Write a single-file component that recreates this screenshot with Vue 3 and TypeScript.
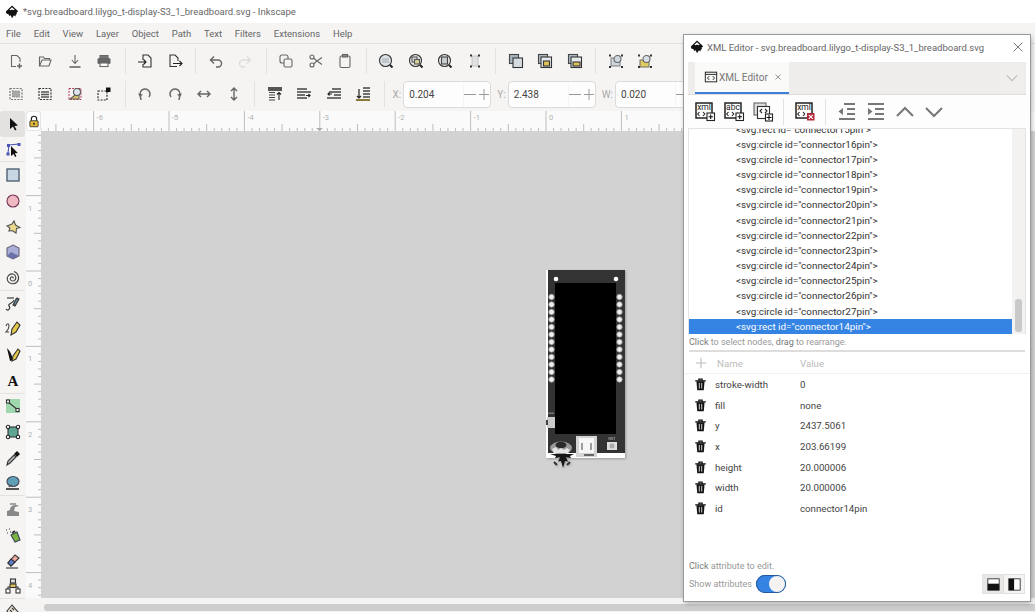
<script setup lang="ts">
const menus = ['File', 'Edit', 'View', 'Layer', 'Object', 'Path', 'Text', 'Filters', 'Extensions', 'Help']

const I: Record<string, string> = {
  logo: '<path d="M8 0.5 15 7l-2 2 .8 1.200-1.300.6-.7 2.200-1.500-1.300L8 15l-1.400-3.300-1.600 1-1-2-2.500-1L1 7.500z" fill="#111" stroke="none"/><path d="M8 2.500 5 5.500l1.600.4L8 5l1.400 1 1.700-.6z" fill="#fff" stroke="none"/>',
  new: '<path d="M8 13.500H3.500V2.500h5.500l3 3v3.500"/><path d="M11.500 10.500v5M9 13h5" stroke-width="1.500"/>',
  open: '<path d="M2.500 13V4h4l1 1.500h5V7"/><path d="M2.500 13h9.500l2-6H5z"/>',
  save: '<path d="M8 2v8M4.800 7 8 10.500 11.200 7" /><path d="M2.500 14h11" stroke-width="1.600"/>',
  print: '<path d="M4 5V2.500h8V5" fill="#777"/><rect x="1.500" y="5" width="13" height="6" rx="1.500" fill="#666" stroke="none"/><rect x="4" y="10" width="8" height="3.500" fill="#fff"/>',
  imp: '<path d="M6 7V2h5l3 3v9H6v-3" stroke="#333"/><path d="M1 9h8M6.500 6.500 9 9l-2.500 2.500" stroke="#222"/>',
  exp: '<path d="M10 13.500H3V2h5l3 3v3" stroke="#333"/><path d="M6 10.500h9M12.500 8l2.500 2.500L12.500 13" stroke="#222"/>',
  undo: '<path d="M3 7h7a3.500 3.500 0 0 1 0 7H8M6 3.500 2.500 7 6 10.500" stroke-width="1.400"/>',
  redo: '<path d="M13 7H6a3.500 3.500 0 0 0 0 7h2M10 3.500 13.500 7 10 10.500" stroke="#ddd" stroke-width="1.400"/>',
  copy: '<rect x="2" y="2" width="8" height="8" rx="2"/><rect x="6" y="6" width="8" height="8" rx="1.500" fill="#f5f4f3"/>',
  cut: '<circle cx="4" cy="4" r="2"/><circle cx="4" cy="12" r="2"/><path d="M5.500 5 9 8l-3.500 3M9 8l5-3.500M9 8l5 3.500"/>',
  paste: '<rect x="3" y="3" width="10" height="11.500" rx="1.500"/><rect x="5.500" y="1.500" width="5" height="2.500" fill="#888"/>',
  z1: '<circle cx="7.500" cy="7.500" r="6" fill="#dfe3e6" stroke="#333"/><rect x="4" y="5" width="7" height="5" fill="#bfc7cc" stroke="none"/><path d="m12 12 2.500 2.500" stroke="#222" stroke-width="2"/>',
  z2: '<circle cx="7.500" cy="7.500" r="6" fill="#e6e6e6" stroke="#333"/><rect x="4" y="4" width="5" height="5" fill="#ddd" stroke="#555"/><rect x="6.500" y="6.500" width="5" height="4.500" fill="#d8cf9c" stroke="#555"/><path d="m12 12 2.500 2.500" stroke="#222" stroke-width="2"/>',
  z3: '<circle cx="7.500" cy="7.500" r="6" fill="#e6e6e6" stroke="#333"/><rect x="4.500" y="4" width="6" height="7" fill="#c8cdd0" stroke="#444"/><path d="m12 12 2.500 2.500" stroke="#222" stroke-width="2"/>',
  z4: '<rect x="5" y="3" width="6" height="10" fill="#e2e2e2" stroke="#bbb" stroke-width=".8"/><path d="M3 1.500h2v2H3zM11 1.500h2v2h-2zM3 12.500h2v2H3zM11 12.500h2v2h-2z" fill="#333" stroke="none"/>',
  o1: '<rect x="1.500" y="1.500" width="9" height="9" fill="#a6b4bf" stroke="#444"/><rect x="5" y="5" width="9.500" height="9.500" fill="#d5dde3" stroke="#333"/>',
  o2: '<rect x="1.500" y="1.500" width="9" height="9" fill="#b0bcc6" stroke="#444"/><rect x="4" y="4" width="10.500" height="10.500" fill="#e7eaec" stroke="#333"/><rect x="6.500" y="8" width="6" height="5" fill="#e0c35a" stroke="#333"/>',
  o3: '<rect x="1.500" y="1.500" width="9" height="9" fill="#b0bcc6" stroke="#444"/><rect x="4" y="4" width="10.500" height="10.500" fill="#e7eaec" stroke="#333"/><rect x="6" y="9" width="7" height="4" fill="#e0c35a" stroke="#333"/>',
  g1: '<rect x="3" y="5" width="9" height="8" fill="#cdd6dc" stroke="#888"/><circle cx="9.500" cy="6" r="3.500" fill="#cdd8e0" stroke="#666"/><path d="M1 1.500h2v2H1zM13 1.500h2v2h-2zM1 13h2v2H1zM13 13h2v2h-2z" fill="#333" stroke="none"/>',
  g2: '<rect x="3" y="7" width="9" height="7" fill="#e3ca63" stroke="#776"/><circle cx="9.500" cy="6" r="3.500" fill="#d8dfe5" stroke="#666"/><path d="M1 1.500h2v2H1zM13 1.500h2v2h-2zM1 13h2v2H1zM13 13h2v2h-2z" fill="#333" stroke="none"/>',
  s1: '<rect x="2" y="2.500" width="12" height="11" stroke="#777" stroke-dasharray="2 1.200" stroke-width="1.200"/><rect x="4.500" y="5" width="7" height="6" fill="#aaa" stroke="#888" stroke-dasharray="1.500 1"/>',
  s2: '<rect x="2" y="2.500" width="12" height="11" stroke="#333" stroke-dasharray="2 1.200" stroke-width="1.200"/><path d="M4 6h8M4 8.500h8M4 11h8" stroke="#555" stroke-width="1.300"/>',
  s3: '<rect x="2" y="2.500" width="12" height="11" stroke="#b35" stroke-dasharray="2 1.200" stroke-width="1"/><path d="M3 13 12 6v7z" fill="#d4c070" stroke="#665"/><circle cx="10" cy="6" r="3.500" fill="#dce6ee" stroke="#555"/>',
  s4: '<rect x="2" y="5" width="9" height="9" stroke="#333" stroke-dasharray="2 1.200" stroke-width="1.200"/><rect x="10" y="1.500" width="4.500" height="4.500" fill="#111" stroke="none"/>',
  r1: '<path d="M4 14 3 8a5 5 0 1 1 9 3" stroke-width="1.500"/><path d="M1 7.500 3 11l3-2.500z" fill="#666" stroke="none"/>',
  r2: '<path d="M12 14 13 8a5 5 0 1 0-9 3" stroke-width="1.500"/><path d="M15 7.500 13 11l-3-2.500z" fill="#666" stroke="none"/>',
  fh: '<path d="M2 8h12M5 5 2 8l3 3M11 5l3 3-3 3" stroke-width="1.400"/>',
  fv: '<path d="M8 2v12M5 5l3-3 3 3M5 11l3 3 3-3" stroke-width="1.400"/>',
  a1: '<path d="M1 2h14M1 4h14" stroke="#222" stroke-width="1.300"/><path d="M2 6.500h6M2 9h6M2 11.500h6M2 14h6" stroke="#444"/><path d="M12 14V6.500M10 8.500l2-2 2 2" stroke="#222"/>',
  a2: '<path d="M1 3h10M1 6h14M1 9h8M1 12h10" stroke="#444" stroke-width="1.300"/><path d="M10 9.500h4M12.500 8l1.500 1.500-1.500 1.500" stroke="#222"/>',
  a3: '<path d="M6 3h9M3 6h12M8 9h7M1 12h14" stroke="#444" stroke-width="1.300"/><path d="M6 8H2M3.500 6.500 2 8l1.500 1.500" stroke="#222"/>',
  a4: '<path d="M8 2h7M8 5h7M8 8h7M8 11h7" stroke="#444" stroke-width="1.300"/><path d="M1 14h14" stroke="#8a7a3a" stroke-width="2"/><path d="M4 3v9M2 10l2 2 2-2" stroke="#222" stroke-width="1.200"/>',
  sel: '<path d="M5 2v11l3-2.500 2 4 1.500-.8-2-3.700 3.500-.5z" fill="#111" stroke="none"/>',
  node: '<path d="M3 11 4 3l10-1" stroke="#4a55b5"/><path d="M6 4v10l2.500-2 1.600 3 1.300-.7-1.600-3 3-.4z" fill="#111" stroke="none"/><rect x="2" y="2" width="3" height="3" fill="#4a55b5" stroke="none"/><rect x="1.500" y="10.500" width="3" height="3" fill="#4a55b5" stroke="none"/><rect x="12.500" y="1" width="3" height="3" fill="#4a55b5" stroke="none"/>',
  rect: '<rect x="2" y="2" width="12" height="12" fill="#c9d6e3" stroke="#45586b" stroke-width="1.300"/>',
  ell: '<circle cx="8" cy="8" r="6" fill="#efb9c2" stroke="#735" stroke-width="1.100"/>',
  star: '<path d="M2 7 7 5l2-3 1.500 4 4.500 2.500-3.500 1L11 14l-4-2.500-3 .5.800-3z" fill="#e9d98c" stroke="#555"/>',
  cube: '<path d="M8 1 14 4v8l-6 3-6-3V4z" fill="#a9aed6" stroke="#667"/><path d="M6 8l8 4-6 3-6-3z" fill="#6a71a8" stroke="none"/>',
  spiral: '<path d="M8 8.500c1-1.500-1.500-2.500-2.500-.8-1 2 1.300 4 3.500 3 3-1.500 2-6-.8-6.700-4-1-7 3-5.700 6.500 1.500 3.500 6.500 4.500 9.500 1.500 3-3.200 1.500-9-3-10.500" stroke="#444" stroke-width="1.100"/>',
  pencil: '<path d="M1 13c2 3 5-1 3-3S9 7 9 4M12 2 8 9l2 1 4-7z" stroke="#333"/><path d="M2 2h7" stroke="#333"/><path d="M11 3 8.500 8.500l1.500.7 3.200-5z" fill="#5f9bb0" stroke="#444"/>',
  pen: '<path d="M1 5c1-3 3-3 3 0s-3 6-3 6h3" stroke="#444"/><path d="M12 1 7 8l-1 6 5-3 4-7z" fill="#e3c84a" stroke="#333"/>',
  cal: '<path d="M2 1c1 5 2 8 3 13l3-1c-1-4-2-8-6-12z" fill="#111" stroke="none"/><path d="M13 2 8 9l-1 5 4-2 4-8z" fill="#e3c84a" stroke="#333"/>',
  text: '<text x="8" y="13" text-anchor="middle" font-family="Liberation Serif,serif" font-weight="700" font-size="15" fill="#111" stroke="none">A</text>',
  grad: '<rect x="1" y="1" width="14" height="14" fill="#9fd8ae" stroke="none"/><path d="M3 4 13 12" stroke="#333"/><rect x="1.500" y="2" width="3" height="3" fill="#fff" stroke="#333"/><rect x="11" y="10.500" width="3" height="3" fill="#fff" stroke="#333"/>',
  mesh: '<rect x="3" y="3" width="10" height="10" fill="#5ea593" stroke="#333"/><circle cx="3" cy="3" r="1.700" fill="#fff" stroke="#222"/><circle cx="13" cy="3" r="1.700" fill="#fff" stroke="#222"/><circle cx="3" cy="13" r="1.700" fill="#fff" stroke="#222"/><circle cx="13" cy="13" r="1.700" fill="#fff" stroke="#222"/>',
  drop: '<path d="M2 15l1-4 6-6 2 2-6 6z" fill="#bbb" stroke="#333"/><path d="M9 4l3-3 3 3-3 3z" fill="#111" stroke="none"/>',
  bucket: '<ellipse cx="8" cy="6.500" rx="6" ry="5" fill="#5e9fb5" stroke="#445"/><path d="M1 14h13" stroke="#555" stroke-width="2"/><path d="M4 12c1-2 2-2 3-1" stroke="#555" stroke-width="1.500"/>',
  tweak: '<path d="M2 15V10l3-1c0-4 3-5 7-5l2 1-4 1-1 4 5 1v4z" fill="#888" stroke="none"/><path d="M5 3h6" stroke="#888" stroke-width="1.500"/>',
  spray: '<path d="M6 8l6-3 3 8-5 2z" fill="#7cb342" stroke="#345"/><path d="M1 3h1M4 2h1M2 6h1M5 5h1" stroke="#333"/><path d="M7 6l3-2" stroke="#333" stroke-width="2"/>',
  eraser: '<path d="M6 13 3 10l7-8 4 3z" fill="#f0a9a0" stroke="#333"/><path d="M6 13 3 10l3-4 4 3z" fill="#5c7fd0" stroke="#333"/><path d="M1 15h12" stroke="#333"/>',
  conn: '<rect x="5.500" y="1" width="5" height="4" fill="#ddd" stroke="#333"/><rect x="1" y="11" width="4" height="4" fill="#fff" stroke="#333"/><rect x="11" y="11" width="4" height="4" fill="#fff" stroke="#333"/><rect x="5" y="6" width="6" height="3.500" fill="#e0c35a" stroke="#333"/><path d="M3 11V9h2M13 11V9h-2" stroke="#333"/>',
  meas: '<path d="M2 7 7 1l6 7-6 7z" fill="#eee5d8" stroke="#333"/><path d="M5 6l2 2M7 4l2 2" stroke="#333"/>',
  xmlTab: '<rect x="1.500" y="2.500" width="13" height="11" stroke="#222" stroke-width="1.100"/><path d="M1.500 5h13" stroke="#222"/><path d="M6 7 4 9.200 6 11.400M10 7l2 2.200-2 2.200" stroke="#222"/>',
  close: '<path d="m3 3 10 10M13 3 3 13" stroke="#777" stroke-width="1.100"/>',
  chev: '<path d="m2 5 6 6 6-6" stroke="#bbb" stroke-width="1.300"/>',
  xmlN: '<rect x="1" y="1" width="16" height="15" fill="#fff" stroke="#222" stroke-width="1.500"/><text x="9" y="8" text-anchor="middle" font-size="8.500" font-family="Roboto,sans-serif" fill="#222" stroke="none">xml</text><path d="M4.500 10 2.700 12 4.500 14M8 10l1.800 2L8 14" stroke="#222"/><rect x="12" y="11" width="7.500" height="7.500" fill="#fff" stroke="#222"/><path d="M15.700 12.500v4.500M13.500 14.700h4.500" stroke="#111"/>',
  abcN: '<rect x="1" y="1" width="16" height="15" fill="#fff" stroke="#222" stroke-width="1.500"/><text x="9" y="8" text-anchor="middle" font-size="8.500" font-family="Roboto,sans-serif" fill="#222" stroke="none">abc</text><path d="M4.500 10 2.700 12 4.500 14M8 10l1.800 2L8 14" stroke="#222"/><rect x="12" y="11" width="7.500" height="7.500" fill="#fff" stroke="#222"/><path d="M15.700 12.500v4.500M13.500 14.700h4.500" stroke="#111"/>',
  dupN: '<rect x="1" y="1" width="12" height="12" fill="#ddd" stroke="#666"/><rect x="4.500" y="4.500" width="12" height="12" fill="#fff" stroke="#333"/><path d="M9 7 7 9l2 2M12 7l2 2-2 2" stroke="#222"/><rect x="12.500" y="12" width="7" height="7" fill="#fff" stroke="#222"/><path d="M16 13v5M13.500 15.500h5" stroke="#111"/>',
  delN: '<rect x="1" y="1" width="16" height="15" fill="#fff" stroke="#222" stroke-width="1.500"/><text x="9" y="8" text-anchor="middle" font-size="8.500" font-family="Roboto,sans-serif" fill="#222" stroke="none">xml</text><path d="M4.500 10 2.700 12 4.500 14M8 10l1.800 2L8 14" stroke="#222"/><rect x="12" y="11" width="7.500" height="7.500" fill="#b1273a" stroke="none"/><path d="m13.800 12.800 4 4M17.800 12.800l-4 4" stroke="#fff"/>',
  unind: '<path d="M7 2h11M10 7h8M10 12h8M2 17h16" stroke="#777" stroke-width="2"/><path d="M6 6v7L1.500 9.500z" fill="#777" stroke="none"/>',
  ind: '<path d="M2 2h16M9 7h9M9 12h9M2 17h16" stroke="#777" stroke-width="2"/><path d="M2 6v7l4.500-3.500z" fill="#777" stroke="none"/>',
  up: '<path d="m2 14 8-8 8 8" stroke="#777" stroke-width="2"/>',
  down: '<path d="m2 6 8 8 8-8" stroke="#777" stroke-width="2"/>',
  trash: '<path d="M3 4h10l-1 11H4z" fill="#111" stroke="none"/><path d="M1.500 3.500h13M6 3.500V1.500h4v2" stroke="#111" stroke-width="1.500"/><path d="M6.500 6v7M9.500 6v7" stroke="#fff" stroke-width="1"/>',
  plus: '<path d="M8 1v14M1 8h14" stroke="#bbb" stroke-width="1.400"/>',
  lock: '<path d="M4.500 7V4.500a3.500 3.500 0 0 1 7 0V7" stroke="#222" stroke-width="1.600"/><rect x="2.500" y="7" width="11" height="8" rx="1" fill="#e0b93b" stroke="#222"/><circle cx="8" cy="11" r="1.300" fill="#222" stroke="none"/>',
  spl1: '<rect x="1" y="1" width="14" height="14" fill="#fff" stroke="#333"/><rect x="1" y="7" width="14" height="8" fill="#111" stroke="none"/>',
  spl2: '<rect x="1" y="1" width="14" height="14" fill="#fff" stroke="#333"/><rect x="1" y="1" width="6.500" height="14" fill="#111" stroke="none"/>',
}

type Item = { i?: string; sep?: boolean }
const row = (s: string): Item[] => s.split(' ').map(k => (k === '|' ? { sep: true } : { i: k }))
const bar1 = row('new open save print | imp exp | undo redo | copy cut paste | z1 z2 z3 z4 | o1 o2 o3 | g1 g2')
const bar2 = row('s1 s2 s3 s4 | r1 r2 fh fv | a1 a2 a3 a4 |')
const spins = [
  { l: 'X:', v: '0.204' },
  { l: 'Y:', v: '2.438' },
  { l: 'W:', v: '0.020' },
]
const tools = row('sel node | rect ell star cube spiral | pencil pen cal text | grad mesh drop bucket | tweak spray eraser conn | meas')

const treeIds = [16, 17, 18, 19, 20, 21, 22, 23, 24, 25, 26, 27]
const attrs = [
  ['stroke-width', '0'],
  ['fill', 'none'],
  ['y', '2437.5061'],
  ['x', '203.66199'],
  ['height', '20.000006'],
  ['width', '20.000006'],
  ['id', 'connector14pin'],
]
const xmlTools = row('xmlN abcN dupN | delN |')
const xmlMoves = ['unind', 'ind', 'up', 'down']

// ruler geometry: 75.4px per unit; x ruler starts at x=41, y ruler at y=130
const unit = 75.4
const hTicks = Array.from({ length: 90 }, (_, n) => {
  const x = 546 - 41 - 7.54 * 67 + n * 7.54
  const k = n - 67
  return { x, h: k % 10 === 0 ? 20 : k % 5 === 0 ? 7 : 3 }
})
const hLabels = [-6, -5, -4, -3, -2, -1, 0, 1].map(v => ({ t: String(v), x: 546 - 41 + v * unit + 3 }))
const vTicks = Array.from({ length: 64 }, (_, n) => {
  const k = n - 18
  return { y: 270 - 130 + k * 7.54, w: k % 10 === 0 ? 15 : k % 5 === 0 ? 7 : 3 }
})
const vLabels = [-1, 0, 1, 2, 3, 4].map(v => ({ t: String(Math.abs(v)), y: 270 - 130 + v * unit + 15 }))

const pinYs = Array.from({ length: 12 }, (_, i) => 27 + i * 7.5)
</script>

<template>
  <div class="app">
    <header class="title">
      <svg class="ic logo" viewBox="0 0 16 16" v-html="I.logo"></svg>
      <span>*svg.breadboard.lilygo_t-display-S3_1_breadboard.svg - Inkscape</span>
    </header>
    <nav class="menu">
      <span v-for="m in menus" :key="m">{{ m }}</span>
    </nav>
    <div class="bar bar1">
      <template v-for="(b, n) in bar1" :key="n">
        <i v-if="b.sep" class="sep"></i>
        <span v-else class="slot"><svg class="ic" viewBox="0 0 16 16" v-html="I[b.i!]"></svg></span>
      </template>
    </div>
    <div class="bar bar2">
      <template v-for="(b, n) in bar2" :key="n">
        <i v-if="b.sep" class="sep"></i>
        <span v-else class="slot"><svg class="ic" viewBox="0 0 16 16" v-html="I[b.i!]"></svg></span>
      </template>
      <div v-for="s in spins" :key="s.l" class="spinwrap">
        <label>{{ s.l }}</label>
        <div class="spin">
          <span class="val">{{ s.v }}</span>
          <svg class="pm" viewBox="0 0 27 25"><path d="M0 0v25" stroke="#eee" /><path d="M1 12.500h12M16 12.500h10M21 7v11" /></svg>
        </div>
      </div>
    </div>

    <main class="work">
      <aside class="tools">
        <template v-for="(b, n) in tools" :key="n">
          <i v-if="b.sep" class="hsep"></i>
          <span v-else class="tool" :class="{ on: b.i === 'sel' }"><svg class="ic" viewBox="0 0 16 16" v-html="I[b.i!]"></svg></span>
        </template>
      </aside>
      <div class="stage">
        <div class="toprow">
          <span class="lockbtn"><svg class="ic" viewBox="0 0 16 16" v-html="I.lock"></svg></span>
          <div class="hruler">
            <svg class="rsvg">
              <path v-for="(t, n) in hTicks" :key="n" :d="`M${t.x} 20v-${t.h}`" />
              <text v-for="l in hLabels" :key="l.t" :x="l.x" y="9">{{ l.t }}</text>
              <path class="mark" d="M275 17h7l-3.500 3z" />
            </svg>
          </div>
        </div>
        <div class="midrow">
          <div class="vruler">
            <svg class="rsvg">
              <path v-for="(t, n) in vTicks" :key="n" :d="`M15 ${t.y}h-${t.w}`" />
              <text v-for="l in vLabels" :key="l.t + l.y" x="2" :y="l.y">{{ l.t }}</text>
            </svg>
          </div>
          <div class="canvas">
            <svg class="board" viewBox="0 0 84 200">
              <rect x="0" y="0" width="79" height="188" fill="#333" />
              <rect x="0" y="0" width="2" height="188" fill="#fff" />
              <rect x="0" y="183" width="79" height="5" fill="#fff" />
              <rect x="9" y="13" width="61" height="151" fill="#000" />
              <circle cx="10" cy="9" r="2.300" fill="#fff" />
              <circle cx="70" cy="9" r="2.300" fill="#fff" />
              <g v-for="y in pinYs" :key="y">
                <circle cx="5.500" :cy="y" r="2.700" fill="#eee" stroke="#999" stroke-width=".8" />
                <circle cx="73.500" :cy="y" r="2.700" fill="#eee" stroke="#999" stroke-width=".8" />
              </g>
              <rect x="1" y="147" width="8" height="11" fill="#ccc" />
              <rect x="0" y="150" width="2" height="5" fill="#444" />
              <rect x="2" y="142.500" width="6" height="1.500" fill="#777" />
              <rect x="30" y="166" width="21" height="21" fill="#d4d4d4" />
              <rect x="33" y="168" width="15" height="15" fill="#f6f6f6" />
              <path d="M36 173v7M45 173v7" stroke="#444" stroke-width="1" />
              <rect x="38" y="184" width="10" height="2" fill="#666" />
              <rect x="61" y="172" width="10" height="8" fill="#ddd" />
              <circle cx="66" cy="176" r="2.500" fill="#aaa" />
              <text x="66" y="170" font-size="3.500" text-anchor="middle" fill="#ccc" font-family="Liberation Sans,sans-serif">RST</text>
              <ellipse cx="15" cy="178" rx="11" ry="6.500" fill="#9a9a9a" />
              <ellipse cx="15" cy="175" rx="5.500" ry="3.200" fill="#2a2a2a" />
              <path d="M6 179l4-2 2 3 3-2 3 2 3-2 3 2-2 3H8z" fill="#e6e6e6" />
              <path d="M4 184h24l-4 2 1 2-5-.5 2 4-3-.5-2 7-2-7-3 .5 2-4-5 .5 1-2z" fill="#161616" />
              <path d="M8 192l3 3M24 192l-3 3" stroke="#333" stroke-width="2" />
            </svg>
          </div>
        </div>
        <div class="hscroll"><span class="thumb"></span></div>
      </div>
    </main>

    <section class="dialog">
      <div class="dtitle">
        <svg class="ic logo" viewBox="0 0 16 16" v-html="I.logo"></svg>
        <span class="dname">XML Editor - svg.breadboard.lilygo_t-display-S3_1_breadboard.svg</span>
        <svg class="ic dclose" viewBox="0 0 16 16" v-html="I.close"></svg>
      </div>
      <div class="tabs">
        <div class="tab">
          <svg class="ic tabic" viewBox="0 0 16 16" v-html="I.xmlTab"></svg>
          <span>XML Editor</span>
          <svg class="ic tabx" viewBox="0 0 16 16"><path d="m3 3 10 10M13 3 3 13" stroke="#999" stroke-width="2" /></svg>
        </div>
        <span class="tabmenu"><svg class="ic" viewBox="0 0 16 16" v-html="I.chev"></svg></span>
      </div>
      <div class="xbar">
        <template v-for="(b, n) in xmlTools" :key="n">
          <i v-if="b.sep" class="xsep"></i>
          <svg v-else class="ic xi" viewBox="0 0 20 20" v-html="I[b.i!]"></svg>
        </template>
        <svg v-for="m in xmlMoves" :key="m" class="ic xi" viewBox="0 0 20 20" v-html="I[m]"></svg>
      </div>
      <div class="tree">
        <div class="rows">
          <div class="trow clipped">&lt;svg:rect id="connector15pin"&gt;</div>
          <div v-for="id in treeIds" :key="id" class="trow">&lt;svg:circle id="connector{{ id }}pin"&gt;</div>
          <div class="trow sel">&lt;svg:rect id="connector14pin"&gt;</div>
        </div>
        <div class="tscroll"><span></span></div>
      </div>
      <p class="hint h1"><b>Click</b> to select nodes, <b>drag</b> to rearrange.</p>
      <div class="pane"></div>
      <div class="ahead">
        <svg class="ic aplus" viewBox="0 0 16 16" v-html="I.plus"></svg>
        <span class="an">Name</span>
        <span class="av">Value</span>
      </div>
      <div v-for="a in attrs" :key="a[0]" class="arow">
        <svg class="ic atrash" viewBox="0 0 16 16" v-html="I.trash"></svg>
        <span class="an">{{ a[0] }}</span>
        <span class="av">{{ a[1] }}</span>
      </div>
      <div class="dfoot">
        <p class="hint"><b>Click</b> attribute to edit.</p>
        <div class="show">
          <span class="hint showl">Show attributes</span>
          <span class="switch"><span></span></span>
          <div class="layout">
            <span><svg class="ic" viewBox="0 0 16 16" v-html="I.spl1"></svg></span>
            <span><svg class="ic" viewBox="0 0 16 16" v-html="I.spl2"></svg></span>
          </div>
        </div>
      </div>
    </section>
  </div>
</template>

<style scoped>
.app {
  position: relative;
  width: 1035px;
  height: 612px;
  overflow: hidden;
  display: flex;
  flex-direction: column;
  background: #f5f4f3;
  font-family: Roboto, "Open Sans", sans-serif;
  font-size: 10px;
  color: #555;
}
.ic {
  width: 16px;
  height: 16px;
  fill: none;
  stroke: #666;
  stroke-width: 1.100;
  flex: none;
  display: block;
}
.title {
  height: 23px;
  flex: none;
  background: #fff;
  display: flex;
  align-items: center;
  gap: 4px;
  padding-left: 5px;
  font-size: 9.500px;
  color: #666;
}
.logo { width: 14px; height: 14px; }
.menu {
  height: 20px;
  flex: none;
  display: flex;
  align-items: center;
  gap: 12.800px;
  padding-left: 6px;
  border-bottom: 1px solid #e2e1df;
  color: #666;
  font-size: 9.500px;
}
.bar {
  flex: none;
  display: flex;
  align-items: center;
  overflow: hidden;
  padding-left: 1px;
}
.bar1 { height: 33px; }
.bar2 { height: 34px; }
.slot {
  width: 29.500px;
  display: flex;
  justify-content: center;
  flex: none;
}
.sep {
  width: 1px;
  height: 26px;
  background: #e3e2e0;
  margin: 0 5px 0 5.500px;
  flex: none;
}
.spinwrap {
  display: flex;
  align-items: center;
  gap: 2px;
  margin-right: 6px;
  flex: none;
  color: #aaa;
  font-size: 10px;
}
.spinwrap:first-of-type { margin-left: 3px; }
.spin {
  width: 88px;
  height: 27px;
  background: #fdfdfd;
  border: 1px solid #dcdbd9;
  border-radius: 4px;
  display: flex;
  align-items: center;
  justify-content: space-between;
  padding: 0 0 0 5px;
  color: #444;
  box-sizing: border-box;
}
.val { font-size: 10px; }
.pm {
  width: 27px;
  height: 25px;
  fill: none;
  stroke: #999;
  stroke-width: 1;
}
.work {
  flex: 1;
  min-height: 0;
  display: flex;
}
.tools {
  width: 25px;
  flex: none;
  display: flex;
  flex-direction: column;
  align-items: stretch;
  overflow: hidden;
}
.tool {
  height: 25.700px;
  flex: none;
  display: flex;
  align-items: center;
  justify-content: center;
}
.tool.on { background: #e3e2e0; border-radius: 3px; }
.hsep {
  height: 1px;
  margin: -1px 0 0;
  flex: none;
  background: #e4e3e1;
}
.stage {
  flex: 1;
  min-width: 0;
  display: flex;
  flex-direction: column;
}
.toprow {
  height: 20px;
  flex: none;
  display: flex;
}
.lockbtn {
  width: 15px;
  height: 20px;
  flex: none;
  margin-left: 1px;
  background: #fff;
  border: 1px solid #e6e5e3;
  border-radius: 3px;
  box-sizing: border-box;
  display: flex;
  align-items: center;
  justify-content: center;
}
.lockbtn .ic { width: 12px; height: 13px; }
.hruler { flex: 1; min-width: 0; background: #fafafa; }
.rsvg {
  display: block;
  width: 100%;
  height: 100%;
  stroke: #bdbdbd;
  stroke-width: 1;
}
.rsvg text {
  font-size: 7.500px;
  fill: #b0b0b0;
  stroke: none;
}
.rsvg .mark { fill: #aaa; stroke: none; }
.midrow {
  flex: 1;
  min-height: 0;
  display: flex;
}
.vruler {
  width: 15px;
  margin-left: 1px;
  flex: none;
  background: #fafafa;
}
.canvas {
  position: relative;
  flex: 1;
  min-width: 0;
  background: #d2d2d2;
}
.board {
  position: absolute;
  left: 505px;
  top: 139px;
  width: 84px;
  height: 200px;
  filter: drop-shadow(1px 1px 1px rgba(0, 0, 0, 0.25));
}
.hscroll {
  height: 14px;
  flex: none;
  display: flex;
  align-items: center;
  background: #f5f4f3;
  padding: 5px 0 1px 19px;
  box-sizing: border-box;
}
.thumb {
  flex: 1;
  height: 7px;
  border-radius: 3px 0 0 3px;
  background: #cdcdcd;
}
.dialog {
  position: absolute;
  left: 684px;
  top: 35px;
  width: 346px;
  height: 566px;
  background: #fff;
  box-shadow: 0 0 0 1px #9a9a9a, 1px 2px 5px rgba(0, 0, 0, 0.35);
  display: flex;
  flex-direction: column;
  color: #444;
}
.dtitle {
  height: 24px;
  flex: none;
  display: flex;
  align-items: center;
  padding: 0 5.500px 0 6px;
  gap: 3px;
  font-size: 9.500px;
  color: #666;
}
.dname { flex: 1; white-space: nowrap; }
.dclose { width: 14px; height: 14px; }
.tabs {
  height: 33px;
  margin: 3px 4px 0;
  flex: none;
  display: flex;
  justify-content: space-between;
  background: #eeedeb;
  border-bottom: 1px solid #ddd;
  box-sizing: border-box;
}
.tab {
  width: 94px;
  margin-left: 7px;
  background: #fafaf9;
  border-bottom: 2.500px solid #3b7fd6;
  display: flex;
  align-items: center;
  gap: 1px;
  padding-left: 9px;
  box-sizing: border-box;
  font-size: 10px;
  color: #777;
}
.tabic { width: 14px; height: 14px; }
.tabx { width: 8px; height: 8px; margin-left: 5px; }
.tabmenu {
  width: 24px;
  margin: 3px 2px;
  display: flex;
  align-items: center;
  justify-content: center;
  background: #f0efed;
}
.tabmenu .ic { width: 14px; height: 14px; }
.xbar {
  height: 33px;
  flex: none;
  display: flex;
  align-items: center;
  gap: 10px;
  padding-left: 11px;
  background: #fdfdfd;
}
.xi { width: 20px; height: 20px; overflow: visible; margin-right: -1px; }
.xsep { width: 1px; height: 26px; background: #e3e2e0; flex: none; margin: 0 1px; }
.tree {
  height: 206px;
  margin: 0 4px;
  flex: none;
  display: flex;
  border: 1px solid #e4e3e1;
  border-bottom: 0;
  box-sizing: border-box;
  overflow: hidden;
  position: relative;
}
.rows {
  flex: 1;
  display: flex;
  flex-direction: column;
  justify-content: flex-end;
  overflow: hidden;
}
.trow {
  height: 15.180px;
  flex: none;
  padding-left: 47px;
  font-size: 9.900px;
  line-height: 15.180px;
  color: #333;
  white-space: nowrap;
}
.trow.sel { background: #3584e4; color: #fff; }
.tscroll {
  width: 13px;
  flex: none;
  background: #f3f2f0;
  display: flex;
  align-items: flex-end;
  justify-content: center;
}
.tscroll span {
  width: 7px;
  height: 33px;
  margin-bottom: 2px;
  background: #c9c9c9;
  border-radius: 3px;
}
.hint {
  margin: 0;
  color: #999;
  font-size: 9px;
  line-height: 14px;
}
.hint b { font-weight: 400; color: #777; }
.h1 {
  height: 16px;
  line-height: 16px;
  margin: 0 5px;
  flex: none;
}
.pane {
  height: 2px;
  margin: 0 5px;
  flex: none;
  background: #dedddb;
}
.ahead,
.arow {
  display: flex;
  align-items: center;
  flex: none;
  font-size: 9.700px;
}
.ahead {
  height: 21px;
  margin-top: 1px;
  color: #bbb;
  border-bottom: 1px solid #f2f1ef;
  box-sizing: border-box;
}
.arow { height: 20.700px; color: #444; }
.aplus { width: 12px; height: 12px; margin: 0 8px 0 11px; }
.atrash { width: 13px; height: 13px; margin: 0 8px 0 10px; }
.ahead .an { padding-left: 2px; }
.an { width: 85px; flex: none; box-sizing: border-box; }
.dfoot {
  margin-top: auto;
  padding: 0 5px 7px;
  display: flex;
  flex-direction: column;
  gap: 1px;
}
.show {
  display: flex;
  align-items: center;
  height: 20px;
}
.showl { width: 67px; flex: none; }
.switch {
  width: 30px;
  height: 18px;
  border-radius: 9px;
  background: #3584e4;
  box-shadow: inset 0 0 0 1px #245a9c;
  position: relative;
  box-sizing: border-box;
}
.switch span {
  position: absolute;
  right: 1px;
  top: 1px;
  width: 16px;
  height: 16px;
  border-radius: 50%;
  background: #f4f3f1;
}
.layout {
  margin-left: auto;
  display: flex;
  height: 20px;
  background: #e8e7e5;
  border: 1px solid #e2e1df;
  box-sizing: border-box;
}
.layout span {
  width: 20px;
  display: flex;
  align-items: center;
  justify-content: center;
}
.layout span + span { background: #f5f4f3; border-left: 1px solid #ddd; }
.layout .ic { width: 13px; height: 13px; }
</style>
